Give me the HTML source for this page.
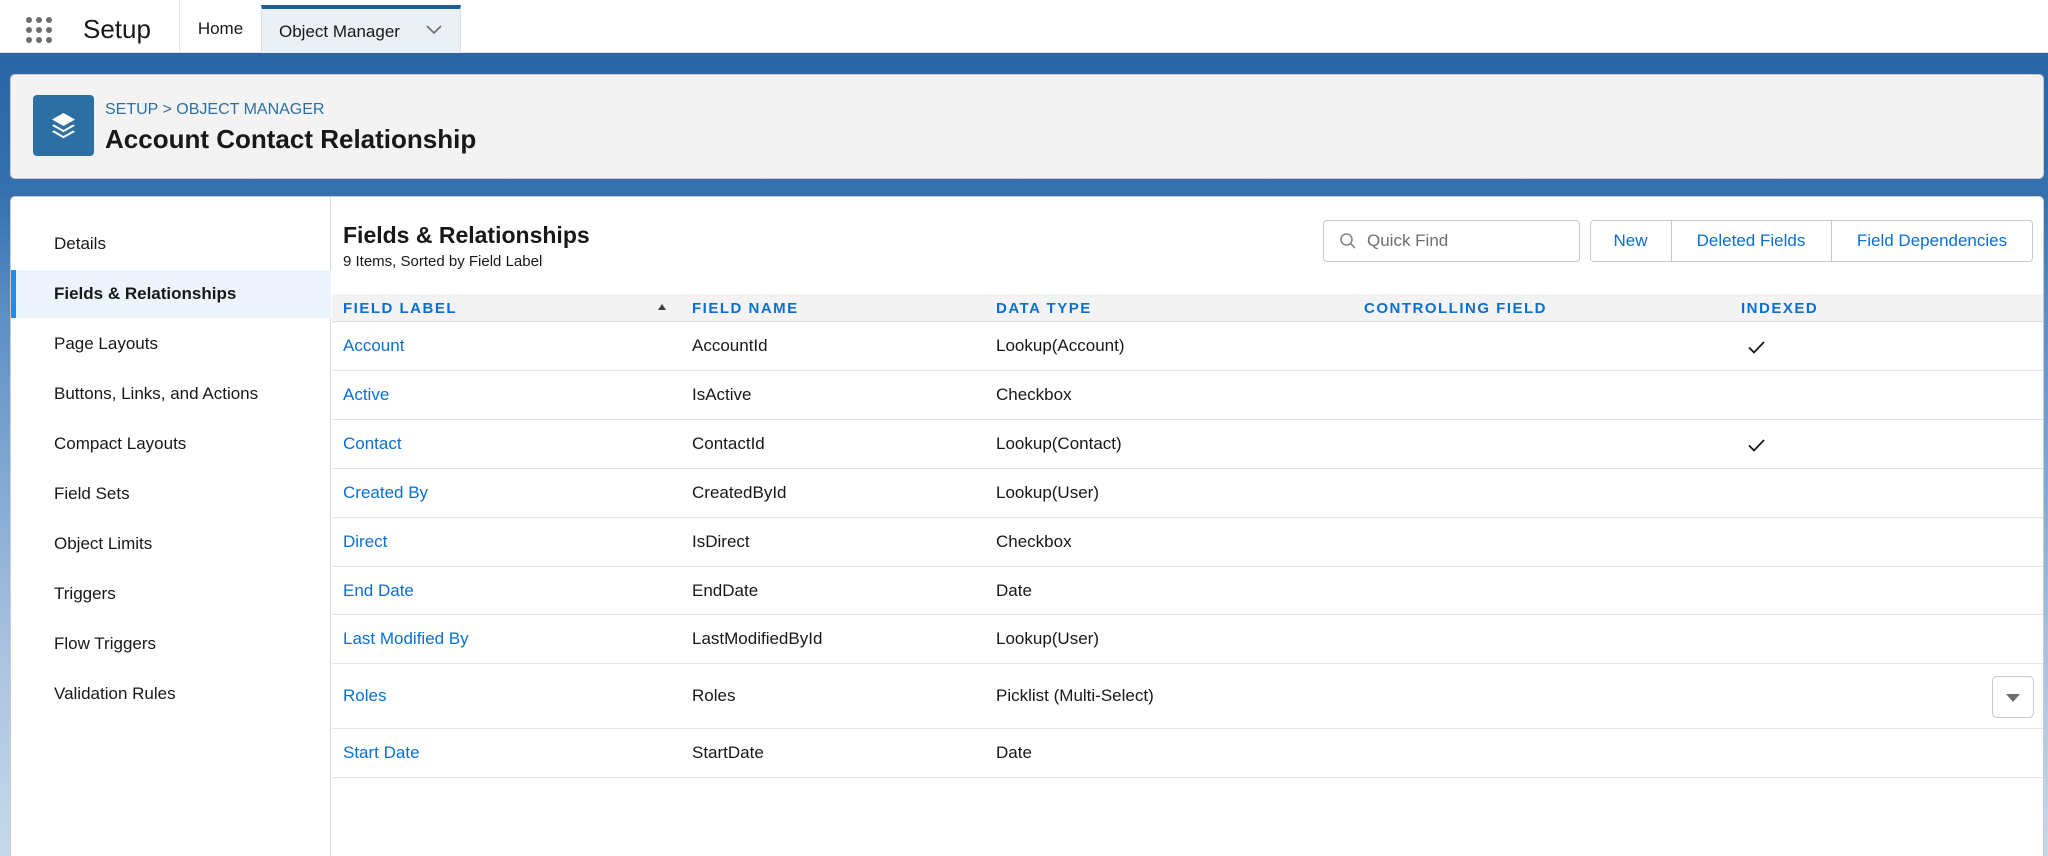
<!DOCTYPE html>
<html><head><meta charset="utf-8"><style>
*{box-sizing:border-box;margin:0;padding:0}
html{width:2048px;height:856px;overflow:hidden}
body{width:2048px;height:856px;overflow:hidden;font-family:"Liberation Sans",sans-serif;background:#2f6aa8;position:relative;color:#181818}
.top{position:absolute;left:0;top:0;width:2048px;height:53px;background:#fff;border-bottom:1px solid #d8dde6}
.abs{position:absolute}
.bg{position:absolute;left:0;top:53px;width:2048px;height:803px;background:linear-gradient(180deg,#2a66a6 0,#3570ae 140px,#5c8fc4 260px,#a9c3e0 600px,#c7d8ec 803px)}
.hdr{position:absolute;left:10px;top:74px;width:2034px;height:105px;background:#f3f3f3;border:1px solid #c9c9c9;border-radius:5px}
.main{position:absolute;left:10px;top:196px;width:2034px;height:660px;background:#fff;border:1px solid #c9c9c9;border-bottom:none;border-radius:5px 5px 0 0;overflow:hidden}
.side{position:absolute;left:0;top:0;width:320px;height:660px;border-right:1px solid #dddbda}
.si{position:absolute;left:43px;font-size:17px;color:#181818}
.hrow{position:absolute;left:321px;top:97px;width:1713px;height:28px;background:#f3f3f3;border-bottom:1px solid #dddbda}
.th{position:absolute;top:6px;font-size:15px;font-weight:bold;color:#0b6fd1;letter-spacing:1.5px}
.row{position:absolute;left:321px;width:1713px;border-bottom:1px solid #e5e5e5}
.row span{position:absolute;font-size:17px;top:50%;transform:translateY(-50%)}
.lk{color:#0b6fd1}
.btn{position:absolute;top:23px;height:42px;font-size:17px;color:#0b6fd1;text-align:center;line-height:42px}
</style></head><body>
<div class="top">
  <svg class="abs" style="left:25px;top:16px" width="28" height="28" viewBox="0 0 28 28" fill="#706e6b"><circle cx="4" cy="4" r="3"/><circle cx="14" cy="4" r="3"/><circle cx="24" cy="4" r="3"/><circle cx="4" cy="14" r="3"/><circle cx="14" cy="14" r="3"/><circle cx="24" cy="14" r="3"/><circle cx="4" cy="24" r="3"/><circle cx="14" cy="24" r="3"/><circle cx="24" cy="24" r="3"/></svg>
  <div class="abs" style="left:83px;top:14px;font-size:26px;color:#181818">Setup</div>
  <div class="abs" style="left:179px;top:0;width:82px;height:53px;border-left:1px solid #e5e5e5;font-size:17px;line-height:58px;text-align:center">Home</div>
  <div class="abs" style="left:261px;top:5px;width:200px;height:48px;background:#eaf0f5;border-top:4px solid #1b5f9e;border-left:1px solid #dde;border-right:1px solid #dde;font-size:17px;line-height:46px;padding-left:17px">Object Manager
    <svg class="abs" style="left:164px;top:16px" width="16" height="10" viewBox="0 0 16 10" fill="none" stroke="#706e6b" stroke-width="1.6"><path d="M1 1 L8 8 L15 1"/></svg></div>
</div>
<div class="bg"></div>
<div class="hdr">
  <div class="abs" style="left:22px;top:20px;width:61px;height:61px;background:#2c6fa3;border-radius:4px">
    <svg width="61" height="61" viewBox="0 0 61 61" fill="#fff"><path d="M30.5 18 L42 24.5 L30.5 31 L19 24.5Z"/><path d="M21 29.5 L30.5 35 L40 29.5 L42 30.7 L30.5 37.2 L19 30.7Z"/><path d="M21 35.5 L30.5 41 L40 35.5 L42 36.7 L30.5 43.2 L19 36.7Z"/></svg>
  </div>
  <div class="abs" style="left:94px;top:26px;font-size:16px;color:#2c6fa3">SETUP &gt; OBJECT MANAGER</div>
  <div class="abs" style="left:94px;top:49px;font-size:26px;font-weight:bold;color:#181818">Account Contact Relationship</div>
</div>
<div class="main">
  <div class="side">
    <div class="si" style="top:37px">Details</div>
    <div class="abs" style="left:0;top:73px;width:320px;height:48px;background:#eef4fd;border-left:5px solid #1b8ef2"></div>
    <div class="si" style="top:87px;font-weight:bold">Fields &amp; Relationships</div>
    <div class="si" style="top:137px">Page Layouts</div>
    <div class="si" style="top:187px">Buttons, Links, and Actions</div>
    <div class="si" style="top:237px">Compact Layouts</div>
    <div class="si" style="top:287px">Field Sets</div>
    <div class="si" style="top:337px">Object Limits</div>
    <div class="si" style="top:387px">Triggers</div>
    <div class="si" style="top:437px">Flow Triggers</div>
    <div class="si" style="top:487px">Validation Rules</div>
  </div>
  <div class="abs" style="left:332px;top:25px;font-size:23px;font-weight:bold">Fields &amp; Relationships</div>
  <div class="abs" style="left:332px;top:56px;font-size:15px">9 Items, Sorted by Field Label</div>
  <div class="abs" style="left:1312px;top:23px;width:257px;height:42px;border:1px solid #c9c9c9;border-radius:4px">
    <svg class="abs" style="left:15px;top:11px" width="18" height="18" viewBox="0 0 18 18" fill="none" stroke="#8a8886" stroke-width="1.6"><circle cx="7.5" cy="7.5" r="5.5"/><path d="M11.5 11.5 L16 16"/></svg>
    <div class="abs" style="left:43px;top:10px;font-size:17px;color:#706e6b">Quick Find</div>
  </div>
  <div class="abs" style="left:1579px;top:23px;width:443px;height:42px;border:1px solid #c9c9c9;border-radius:4px"></div>
  <div class="btn" style="left:1579px;width:81px">New</div>
  <div class="abs" style="left:1660px;top:23px;width:1px;height:42px;background:#c9c9c9"></div>
  <div class="btn" style="left:1660px;width:160px">Deleted Fields</div>
  <div class="abs" style="left:1820px;top:23px;width:1px;height:42px;background:#c9c9c9"></div>
  <div class="btn" style="left:1820px;width:202px">Field Dependencies</div>
  <div class="hrow">
    <div class="th" style="left:11px">FIELD LABEL</div>
    <div class="abs" style="left:326px;top:10px;width:0;height:0;border-left:4px solid transparent;border-right:4px solid transparent;border-bottom:6px solid #3e3e3c"></div>
    <div class="th" style="left:360px">FIELD NAME</div>
    <div class="th" style="left:664px">DATA TYPE</div>
    <div class="th" style="left:1032px">CONTROLLING FIELD</div>
    <div class="th" style="left:1409px">INDEXED</div>
  </div>
  <div class="row" style="top:125px;height:49px"><span class="lk" style="left:11px">Account</span><span style="left:360px">AccountId</span><span style="left:664px">Lookup(Account)</span><svg class="abs" style="left:1416px;top:19px" width="17" height="13" viewBox="0 0 17 13" fill="none" stroke="#181818" stroke-width="1.8"><path d="M1 6.5 L6 11.5 L16 1"/></svg></div>
  <div class="row" style="top:174px;height:49px"><span class="lk" style="left:11px">Active</span><span style="left:360px">IsActive</span><span style="left:664px">Checkbox</span></div>
  <div class="row" style="top:223px;height:49px"><span class="lk" style="left:11px">Contact</span><span style="left:360px">ContactId</span><span style="left:664px">Lookup(Contact)</span><svg class="abs" style="left:1416px;top:19px" width="17" height="13" viewBox="0 0 17 13" fill="none" stroke="#181818" stroke-width="1.8"><path d="M1 6.5 L6 11.5 L16 1"/></svg></div>
  <div class="row" style="top:272px;height:49px"><span class="lk" style="left:11px">Created By</span><span style="left:360px">CreatedById</span><span style="left:664px">Lookup(User)</span></div>
  <div class="row" style="top:321px;height:49px"><span class="lk" style="left:11px">Direct</span><span style="left:360px">IsDirect</span><span style="left:664px">Checkbox</span></div>
  <div class="row" style="top:370px;height:48px"><span class="lk" style="left:11px">End Date</span><span style="left:360px">EndDate</span><span style="left:664px">Date</span></div>
  <div class="row" style="top:418px;height:49px"><span class="lk" style="left:11px">Last Modified By</span><span style="left:360px">LastModifiedById</span><span style="left:664px">Lookup(User)</span></div>
  <div class="row" style="top:467px;height:65px"><span class="lk" style="left:11px">Roles</span><span style="left:360px">Roles</span><span style="left:664px">Picklist (Multi-Select)</span>
    <div class="abs" style="left:1660px;top:12px;width:42px;height:42px;border:1px solid #c9c9c9;border-radius:5px"><div class="abs" style="left:13px;top:17px;width:0;height:0;border-left:7px solid transparent;border-right:7px solid transparent;border-top:8px solid #706e6b"></div></div></div>
  <div class="row" style="top:532px;height:49px"><span class="lk" style="left:11px">Start Date</span><span style="left:360px">StartDate</span><span style="left:664px">Date</span></div>
</div>
</body></html>
